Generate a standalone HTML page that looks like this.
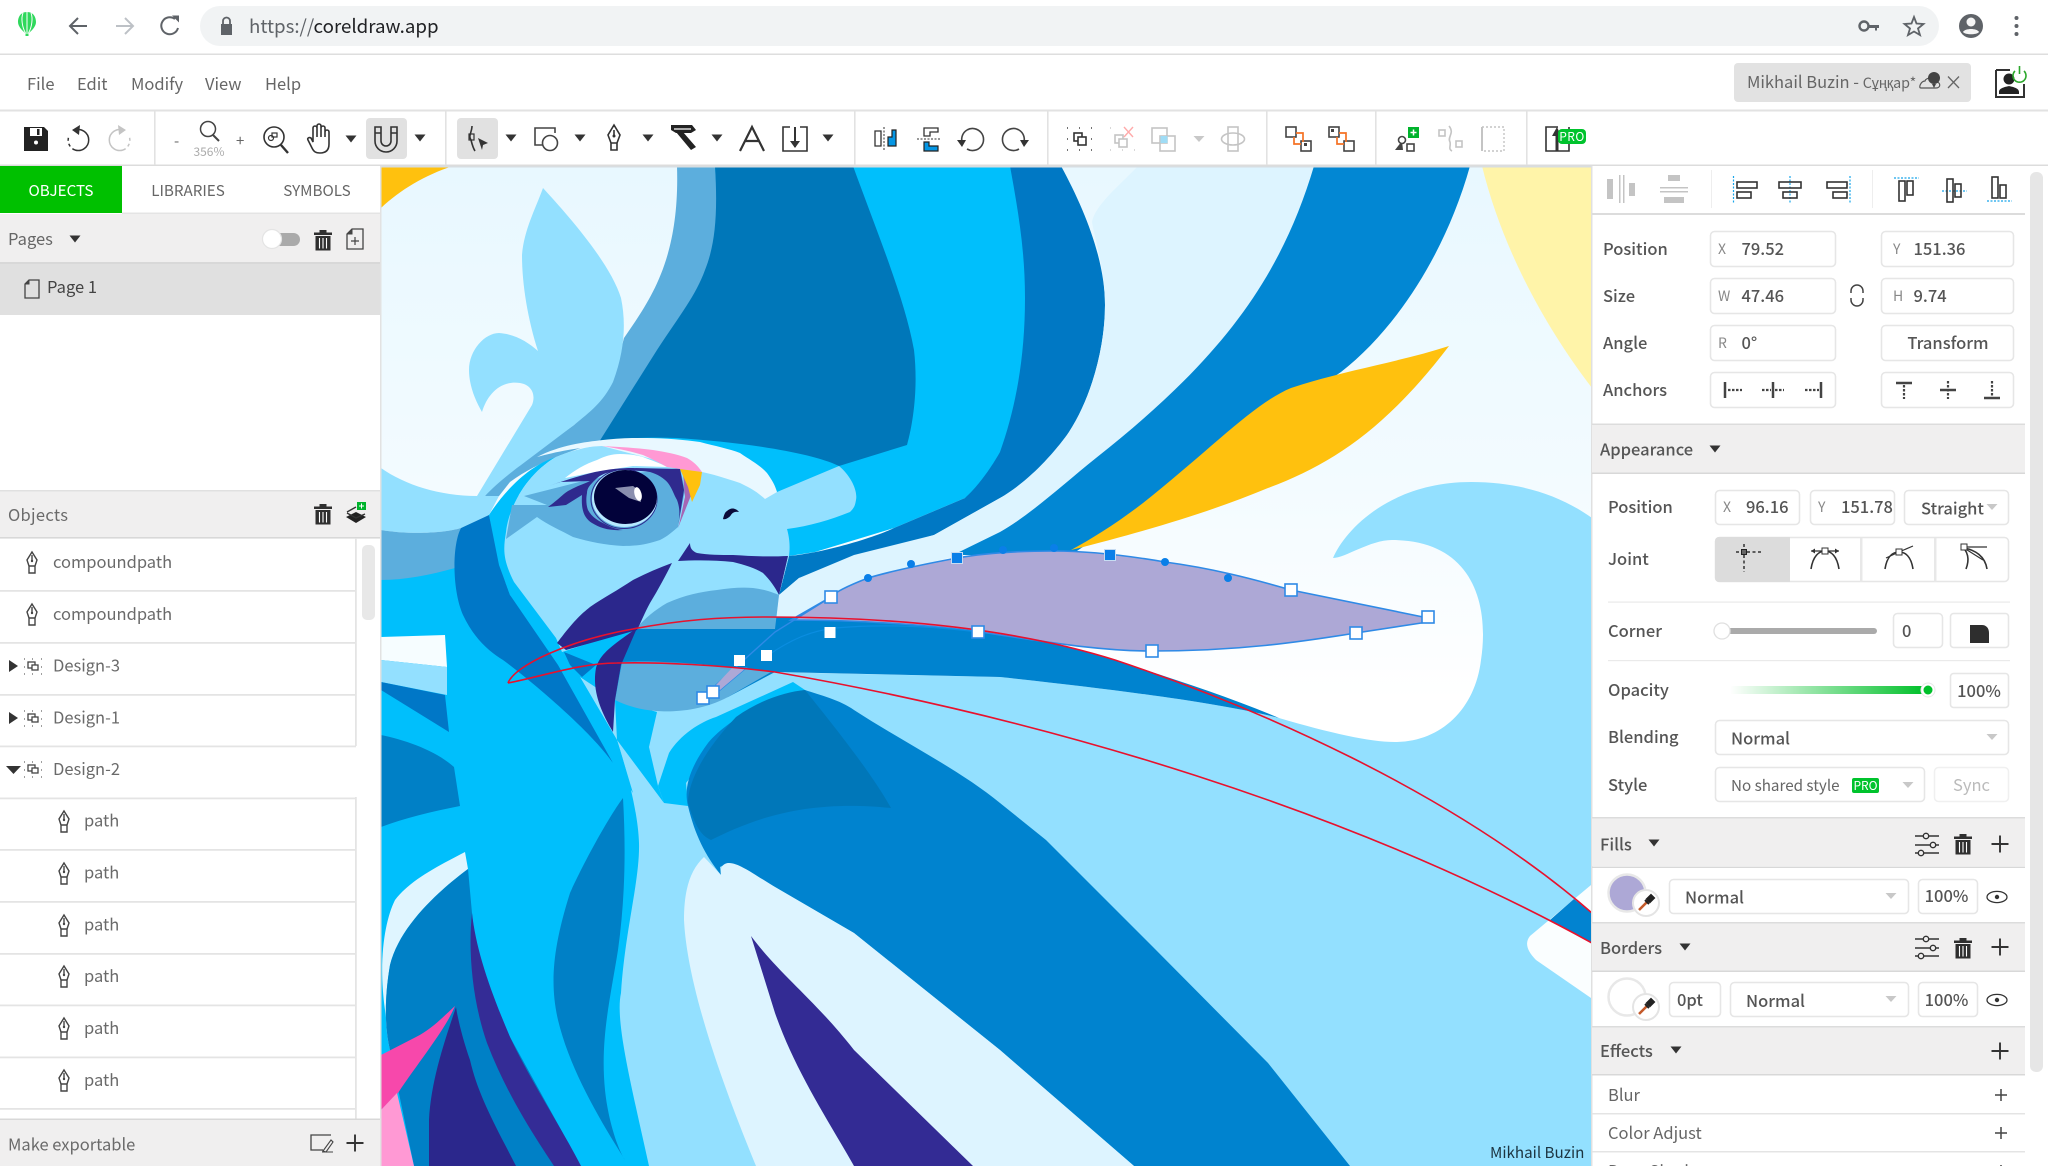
<!DOCTYPE html>
<html lang="en"><head><meta charset="utf-8"><title>CorelDRAW.app</title>
<style>
html,body{margin:0;padding:0;background:#fff;overflow:hidden}
svg{display:block}
text{font-family:"Noto Sans CJK SC","Noto Sans CJK JP","Liberation Sans",sans-serif;font-size:16.5px;fill:#555}
.l{font-weight:500;fill:#555}
.o{fill:#6a6a6a}
.m{fill:#666}
.b{fill:#fff;stroke:#e6e6e6;stroke-width:1.6}
.i{fill:none;stroke:#333;stroke-width:1.6}
.g{fill:none;stroke:#c4c4c4;stroke-width:1.6}
.sel{fill:#fff;stroke:#2f8ae6;stroke-width:1.6}
.hd{fill:#f0efef}
.ln{fill:#e2e2e2}
</style></head><body>
<svg xmlns="http://www.w3.org/2000/svg" width="2048" height="1166" viewBox="0 0 2048 1166">
<defs>
<clipPath id="cv"><rect x="381" y="166" width="1211" height="1000"/></clipPath>
<linearGradient id="bg" x1="0" y1="166" x2="0" y2="700" gradientUnits="userSpaceOnUse"><stop offset="0" stop-color="#e8f8ff"/><stop offset=".6" stop-color="#f3fbff"/><stop offset="1" stop-color="#fff"/></linearGradient>
<linearGradient id="op" x1="0" x2="1" y1="0" y2="0"><stop offset="0" stop-color="#00c02a" stop-opacity="0"/><stop offset="1" stop-color="#00c02a"/></linearGradient>
<path id="tri" d="M-5.5 -3.5H5.5L0 3.5Z" fill="#333"/>
<path id="trg" d="M-5.5 -3H5.5L0 3Z" fill="#c8c8c8"/>
<g id="trash"><path d="M-9 -7.5H9V-5H-9Z M-3.5 -7.5V-10H3.5V-7.5Z M-7.5 -4H7.5V10.5H-7.5Z" fill="#2f2f2f"/><path d="M-3.5 -2V8.5M0 -2V8.5M3.5 -2V8.5" stroke="#fff" stroke-width="1.1"/></g>
<g id="nib"><path d="M0 -11L5 -3L3 3H-3L-5 -3Z M-3 3V10H3V3 M0 -8V-2" class="i" style="stroke:#444;stroke-width:1.4"/><circle cx="0" cy="-2" r="1.2" fill="#444"/></g>
<g id="grp"><path d="M-9 -7h1M-1 -7h1M8 -7h1M-9 1h1M8 1h1M-9 8h1M-1 8h1M8 8h1" stroke="#666" stroke-width="1.3"/><rect x="-5" y="-4" width="7" height="6" class="i" style="stroke:#444;stroke-width:1.3"/><rect x="-1" y="-1" width="6" height="5" fill="#fff" style="stroke:#444;stroke-width:1.3"/></g>
<g id="plus"><path d="M-8.5 0H8.5M0 -8.5V8.5" stroke="#333" stroke-width="1.9"/></g>
<g id="sl"><path d="M-12 -8H12M-12 1H12M-12 9H12" stroke="#333" stroke-width="1.5"/><circle cx="-1" cy="-8" r="2.7" fill="#f0efef" stroke="#333" stroke-width="1.4"/><circle cx="6" cy="1" r="2.7" fill="#f0efef" stroke="#333" stroke-width="1.4"/><circle cx="-6" cy="9" r="2.7" fill="#f0efef" stroke="#333" stroke-width="1.4"/></g>
<g id="eye"><ellipse rx="10" ry="5.6" class="i" style="stroke-width:1.3"/><circle r="2.2" fill="#333"/></g>
<g id="drop"><circle r="13" fill="#fff" stroke="#e4e4e4" stroke-width="2"/><path d="M-7 7L2 -2" stroke="#c45a2a" stroke-width="2.6"/><path d="M-1 -3L3 1M1 -4L5 -8L8 -5L4 -1Z" stroke="#222" stroke-width="2" fill="#222"/></g>
<g id="hW"><rect x="-6" y="-6" width="12" height="12" class="sel"/></g>
</defs>

<!-- ARTWORK -->
<g clip-path="url(#cv)">
<rect x="381" y="166" width="1211" height="1000" fill="url(#bg)"/>
<path d="M381 166H453C425 175 400 190 381 208Z" fill="#ffc10e"/>
<path d="M1482 166H1592V388C1555 340 1505 260 1482 166Z" fill="#fff4a9"/>

<!-- cyan base -->
<path d="M599 442L715 166H1060V460L965 498L894 528L815 552L789 556L700 650L680 1166H381V580L489 515Z" fill="#00bffc"/>
<!-- mid band -->
<path d="M677 166H715C720 240 716 270 696 300C680 335 640 395 599 442C575 450 540 460 510 482L499 496H485C495 480 510 472 525 460L574 425C595 405 615 375 624 338C650 300 680 260 677 166Z" fill="#5caedd"/>
<!-- dark block -->
<path d="M715 166H853C880 240 905 300 914 350C918 385 914 420 907 445L839 466C810 452 740 442 677 438C650 437 620 438 599 442L657 350C680 315 696 295 705 270C715 245 718 215 715 166Z" fill="#0077b9"/>

<!-- crest and left light -->
<path d="M543 188C565 212 610 262 621 298C626 322 625 350 613 382C603 402 590 412 574 425L525 462C510 473 495 485 485 496H499L489 515L461 528C445 533 410 535 381 530V468C405 485 440 496 477 496L532 405C536 395 532 385 520 383C500 380 487 395 482 412C475 400 469 385 469 370C469 350 485 333 499 333C515 334 528 342 538 351C528 320 522 285 522 255C524 230 535 210 543 188Z" fill="#93e0ff"/>
<path d="M381 530C410 535 445 533 461 528L455 568C430 575 405 580 381 580Z" fill="#5caedd"/>

<!-- left column pieces -->
<path d="M381 637L445 635L447 667L381 660Z" fill="#f6fdff"/>
<path d="M381 660L447 667V695L381 682Z" fill="#93e0ff"/>
<path d="M381 682L445 695L449 732L381 690Z" fill="#0077c7"/>
<path d="M381 735C405 740 435 750 454 767L460 806C430 812 405 818 381 827Z" fill="#0080c6"/>
<path d="M465 852L468 869C440 890 400 925 390 965C384 1000 385 1030 390 1050L385 1010C378 960 385 920 395 900C410 880 440 865 465 852Z" fill="#dff5ff"/>
<path d="M468 869C440 890 400 925 390 965C384 1000 385 1030 390 1050L414 1166H581L510 1037C490 990 475 950 472 913Z" fill="#0080c6"/>
<path d="M472 913C468 950 472 1000 487 1043C505 1090 530 1130 554 1166H581C560 1125 530 1080 510 1037C490 990 476 950 472 913Z" fill="#342c96"/>
<path d="M456 1007C445 1040 431 1080 429 1120V1166H516C495 1125 478 1095 470 1060C463 1040 458 1020 456 1007Z" fill="#2b278c"/>
<path d="M455 1006C440 1020 430 1030 416 1037L381 1055V1110L398 1093C420 1060 445 1030 455 1006Z" fill="#f748ab"/>
<path d="M381 1110L397 1093L414 1166H381Z" fill="#ff99d4"/>

<!-- big light field with white blob -->
<path d="M1333 558C1345 530 1390 482 1471 482C1520 482 1560 495 1592 518V1166H649C630 1080 615 1020 621 993C625 930 640 880 639 843C638 810 625 765 617 740L580 677L615 700L769 672L1000 677C1120 690 1220 703 1279 718C1330 733 1370 742 1395 742C1440 742 1475 710 1481 660C1490 600 1470 540 1392 540C1370 540 1345 558 1333 558Z" fill="#93e0ff"/>
<path d="M1591 885L1530 936Q1522 946 1536 960L1591 998Z" fill="#fafeff"/>
<path d="M1574 899L1550 920L1592 943V913Z" fill="#0283d0"/>

<!-- dark leaf in cyan column -->
<path d="M623 798C626 850 625 900 618 950C610 1000 600 1040 605 1090C608 1120 618 1150 625 1160C600 1120 570 1070 558 1020C550 985 552 950 570 893C585 860 610 815 623 798Z" fill="#0080c6"/>

<!-- under head shapes -->
<path d="M615 700L657 712L649 747L658 786L664 803L617 740Z" fill="#00bffc"/>
<path d="M658 786L669 753C680 735 700 722 716 717L793 682L805 690L736 730L696 770L686 783L688 806L664 803Z" fill="#00bffc"/>

<!-- lower blue band -->
<path d="M805 690C820 695 840 700 854 710C900 740 960 770 1000 803L1046 840L1153 947L1268 1063L1350 1166H1134L1000 1050L854 933L775 887L728 863L720 867L721 875C705 855 695 835 688 806C684 790 688 770 708 743C725 722 770 695 805 690Z" fill="#0083cf"/>
<path d="M805 690C825 715 870 770 891 808C860 805 835 805 805 809C765 815 735 828 711 840C700 835 695 825 688 803C688 785 700 755 736 717C760 700 785 692 805 690Z" fill="#0077b9"/>
<path d="M704 857C690 870 684 890 684 920C686 960 700 1030 756 1166H1134L1000 1050L854 933L775 887C755 875 738 862 728 863C722 864 720 868 721 875Z" fill="#ddf4ff"/>
<path d="M751 936L775 1013C795 1070 825 1115 854 1166H973L854 1050C815 1000 780 975 751 936Z" fill="#332b94"/>

<!-- right bands -->
<path d="M1010 166H1061C1085 210 1105 260 1105 305C1105 350 1090 400 1069 432C1050 465 1025 485 1000 498L934 535C890 548 830 570 799 578L779 595L789 556C830 552 880 535 894 528L965 498C985 480 1000 452 1000 452C1015 410 1025 360 1025 298C1025 250 1018 210 1010 166Z" fill="#0078c4"/>
<path d="M1138 166H1314L1300 300L1096 470L1000 532L953 557L868 578L831 597L775 630L779 595L799 578L854 555L934 535L1000 498C1040 475 1069 432 1069 432C1090 400 1105 350 1105 305C1105 270 1095 240 1092 222C1095 205 1120 185 1138 166Z" fill="#ddf4ff"/>
<path d="M1314 166H1470C1445 255 1395 330 1341 372L1071 555H953L1000 532C1030 515 1060 487 1096 458C1220 360 1280 280 1314 166Z" fill="#0287d3"/>
<path d="M1449 346C1400 362 1345 370 1291 388C1255 403 1215 445 1153 495C1125 518 1095 537 1071 550C1150 530 1210 512 1268 488C1330 465 1385 430 1449 346Z" fill="#ffc10e"/>

<!-- neck -->
<path d="M489 515L461 528C452 545 452 590 463 615C475 640 490 652 503 660C530 680 590 730 613 763L570 665L510 595C500 570 495 540 489 515Z" fill="#0077c7"/>
<path d="M556 457C530 465 505 490 489 515L499 565L510 595L558 665L613 763L633 793L617 740L580 677L558 640L514 582C503 560 503 550 506 532C508 510 525 475 556 457Z" fill="#00bffc"/>

<!-- face -->
<path d="M556 457C590 442 640 440 677 442C720 447 750 465 777 492L839 466C850 475 858 490 856 500C855 505 855 507 850 512C830 520 810 526 787 529C790 540 790 548 789 556L779 595L775 630L637 628L562 652L556 638L514 582C503 560 503 550 506 532C508 510 525 475 556 457Z" fill="#93e0ff"/>
<path d="M537 457C560 445 585 442 603 440C620 438 635 438 647 438C665 438 685 440 700 442C715 446 730 449 740 453C750 460 760 465 767 473C772 480 775 485 777 492L765 499C755 490 748 487 740 483C725 478 712 474 702 472L602 446C580 447 555 452 537 457Z" fill="#e9f8ff"/>
<path d="M524 496L595 478L680 468L685 490L678 527C672 532 668 536 660 540C645 545 635 546 623 546C605 545 590 542 573 537C560 530 548 525 537 517L506 539L512 505L547 505Z" fill="#5caedd"/>
<path d="M565 478C575 470 585 464 597 460C605 456 612 454 620 454C628 454 636 455 643 457C650 460 660 463 667 467L633 466L595 472Z" fill="#fff"/>
<path d="M602 446C620 447 638 448 653 450C665 452 677 454 687 458C694 462 698 466 702 472L680 469L667 467C660 463 652 459 643 455C630 451 615 448 602 446Z" fill="#ff99d4"/>
<path d="M543 488C560 482 578 476 595 472C610 469 620 468 633 468L680 469L684 490L678 527C680 515 680 508 677 500C674 495 672 488 668 483C664 478 657 474 650 472C635 470 622 470 610 472C602 474 598 477 595 480C590 485 587 488 587 493C586 498 586 505 588 510C592 517 597 520 603 523C610 527 615 529 623 530C610 531 600 528 592 523C584 518 581 510 582 495L566 505L548 507C558 500 565 492 570 490C577 486 584 484 590 481L560 482Z" fill="#2f2a8e"/>
<path d="M682 469L688 480L692 493L678 528C681 518 683 505 685 497C684 488 684 478 682 469Z" fill="#a566b4"/>
<path d="M680 469L702 472L700 485L692 502L688 487Z" fill="#ffc10e"/>
<ellipse cx="624" cy="499" rx="33" ry="29.5" fill="#5caedd"/>
<ellipse cx="624" cy="499" rx="33" ry="29.5" fill="none" stroke="#2f2a8e" stroke-width="1"/>
<ellipse cx="624.5" cy="498.5" rx="32.5" ry="28.5" fill="#b8e9ff"/>
<ellipse cx="625.5" cy="497" rx="31.5" ry="27" fill="#02023a"/>
<path d="M615 488L633 486C637 488 640 495 641 502L629 498Z" fill="#8a8fae"/>
<ellipse cx="638" cy="494" rx="3.5" ry="7" fill="#fff" transform="rotate(-15 638 494)"/>
<path d="M723 519C724 515 725 512 727 511C730 508 735 507 739 512C735 511 732 513 731 515C729 518 725 520 723 519Z" fill="#0b0b3a"/>
<path d="M690 543L678 561C695 560 715 560 733 562C745 565 755 568 763 573C770 580 775 587 779 595L788 556C765 557 750 556 733 555C720 555 708 555 697 553C692 551 690 548 690 543Z" fill="#2b278c"/>

<!-- blue under beak -->
<path d="M633 629C680 620 720 617 767 617C900 617 1020 630 1115 660C1170 678 1230 697 1279 718C1220 703 1120 690 1000 677L775 672L728 697L657 711L615 700L622 660Z" fill="#0083cf"/>
<path d="M622 662C660 660 720 665 771 672L728 697C700 712 670 712 657 711C640 710 625 705 615 700Z" fill="#5caedd"/>
<path d="M636 629C645 618 655 610 667 603C685 595 700 592 717 590C730 588 742 587 753 588C762 589 772 592 779 595L775 629Z" fill="#5caedd"/>
<path d="M672 563C658 568 645 574 633 580C618 590 603 598 590 607C580 615 573 622 557 643L566 650L637 630C642 620 645 612 650 603C658 590 666 575 672 563Z" fill="#2b278c"/>
<path d="M637 628L621 665L615 700L613 732C600 710 592 690 596 668C600 655 608 648 637 628Z" fill="#2b278c"/>
<path d="M564 652L596 665L582 677L570 665Z" fill="#0077c7"/>

<!-- selected shape -->
<path d="M1428 618L1291 590C1250 578 1210 568 1165 562C1130 556 1090 551 1054 551C1020 551 985 553 957 558C925 564 895 570 868 578C850 585 835 592 831 597L791 620C860 620 940 625 1000 635C1060 644 1105 651 1152 651C1240 651 1300 642 1356 633L1428 622Z" fill="#ada8d6" stroke="#2f8ae6" stroke-width="1.6"/>
<path d="M831 597L775 632L716 685L720 690L746 668L732 668" fill="none" stroke="#2f8ae6" stroke-width="1.4"/>
<path d="M732 668L746 668L720 690L716 685Z" fill="#ada8d6"/>
<path d="M767 656C790 640 810 631 835 628C880 624 930 626 978 632" fill="none" stroke="#0a8de0" stroke-width="1.2"/>

<!-- red curves -->
<path d="M508 683C515 665 570 640 633 629C680 620 720 617 767 617C900 617 1020 630 1115 660C1250 705 1450 790 1592 913" fill="none" stroke="#e8112d" stroke-width="1.6"/>
<path d="M508 683C540 677 580 663 617 663C660 662 720 665 775 672C1050 720 1350 810 1592 943" fill="none" stroke="#e8112d" stroke-width="1.6"/>

<!-- handles -->
<use href="#hW" x="831" y="597"/><use href="#hW" x="1291" y="590"/><use href="#hW" x="1428" y="617"/><use href="#hW" x="1356" y="633"/><use href="#hW" x="1152" y="651"/><use href="#hW" x="978" y="632"/><use href="#hW" x="703" y="698"/><use href="#hW" x="713" y="692"/>
<rect x="824.500" y="627" width="11" height="11" fill="#fff"/><rect x="734" y="655" width="11" height="11" fill="#fff"/><rect x="761" y="650" width="11" height="11" fill="#fff"/>
<rect x="951.500" y="552.500" width="11" height="11" fill="#0a7fe8" stroke="#c6dcf2"/><rect x="1104.500" y="549.500" width="11" height="11" fill="#0a7fe8" stroke="#c6dcf2"/>
<g fill="#0a7fe8"><circle cx="868" cy="578" r="4"/><circle cx="911" cy="564" r="4"/><circle cx="1003" cy="550" r="4"/><circle cx="1054" cy="548" r="4"/><circle cx="1165" cy="562" r="4"/><circle cx="1228" cy="578" r="4"/></g>
<text x="1490" y="1158" style="fill:#1c3440;font-size:15.2px">Mikhail Buzin</text>
</g>
<rect x="381" y="166" width="1211" height="1.500" fill="#d8dde0"/>

<!-- CHROME TOP BAR -->
<rect x="0" y="53.500" width="2048" height="1.500" fill="#dedede"/>
<rect x="200" y="6" width="1739" height="40" rx="20" fill="#f1f3f4"/>
<path d="M27 12C20 12 18 18 18 22C18 27 23 31 25 33H29C31 31 36 27 36 22C36 18 34 12 27 12Z" fill="#2fd85c"/>
<path d="M27 12V33M23 13C21 18 22 27 25.500 33M31 13C33 18 32 27 28.500 33" stroke="#fff" stroke-width="1" fill="none"/><rect x="25.500" y="33.500" width="3" height="2.500" fill="#2fd85c"/>
<path d="M87 26H71M78 18L70 26L78 34" fill="none" stroke="#5f6368" stroke-width="2"/>
<path d="M116 26H132M125 18L133 26L125 34" fill="none" stroke="#bdc1c6" stroke-width="2"/>
<path d="M178 28A8.500 8.500 0 1 1 175 19" fill="none" stroke="#5f6368" stroke-width="2"/><path d="M172 15.500H179V22.500Z" fill="#5f6368"/>
<path d="M221 24H232V35H221Z" fill="#5f6368"/><path d="M223 24V21A3.500 3.500 0 0 1 230 21V24" fill="none" stroke="#5f6368" stroke-width="1.800"/>
<text x="249" y="33" style="font-size:18.700px;fill:#5f6368">https://<tspan fill="#202124">coreldraw.app</tspan></text>
<circle cx="1864" cy="26" r="4.500" fill="none" stroke="#5f6368" stroke-width="2.400"/><path d="M1868 25H1879V28H1877V30.500H1875V28H1868Z" fill="#5f6368"/>
<path d="M1914 17L1916.500 23.500L1923.500 24L1918 28.500L1920 35L1914 31.500L1908 35L1910 28.500L1904.500 24L1911.500 23.500Z" fill="none" stroke="#5f6368" stroke-width="1.800"/>
<circle cx="1971" cy="26" r="12" fill="#5f6368"/><circle cx="1971" cy="22" r="4.500" fill="#f5f5f5"/><path d="M1963 32C1965 28 1977 28 1979 32C1977 35 1965 35 1963 32Z" fill="#f5f5f5"/>
<circle cx="2016.500" cy="18" r="2" fill="#5f6368"/><circle cx="2016.500" cy="26" r="2" fill="#5f6368"/><circle cx="2016.500" cy="34" r="2" fill="#5f6368"/>

<!-- MENU -->
<g><text x="27" y="90" class="m">File</text><text x="77" y="90" class="m">Edit</text><text x="131" y="90" class="m">Modify</text><text x="205" y="90" class="m">View</text><text x="265" y="90" class="m">Help</text></g>
<rect x="1734" y="63" width="237" height="39" rx="4" fill="#e2e2e2"/>
<text x="1747" y="88" style="font-size:16.500px;fill:#666">Mikhail Buzin - <tspan style="font-size:14.300px">Сұңқар*</tspan></text>
<path d="M1921 88C1918 88 1921 81 1925 81C1926 77 1935 77 1936 82C1941 82 1941 88 1936 88Z" fill="none" stroke="#555" stroke-width="1.200"/><circle cx="1934" cy="78" r="6" fill="#444"/><path d="M1932 84H1936L1934 88Z" fill="#444"/>
<path d="M1948 76.500L1959 88M1959 76.500L1948 88" stroke="#666" stroke-width="1.300"/>
<path d="M1996 70H2010M1996 70V97H2024V84" fill="none" stroke="#333" stroke-width="2"/><circle cx="2009" cy="79" r="5.500" fill="#222"/><path d="M1999 94V92C1999 88 2005 87 2009 86C2013 87 2019 88 2019 92V94Z" fill="#222"/>
<path d="M2015 71A6.500 6.500 0 1 0 2024 71M2019.500 66V74" fill="none" stroke="#2ca82c" stroke-width="1.600"/>
<rect x="0" y="109.500" width="2048" height="2" class="ln"/>

<!-- TOOLBAR -->
<rect x="0" y="164.500" width="2048" height="1.500" style="fill:#dcdcdc"/>
<g class="ln"><rect x="154" y="111" width="1.600" height="54"/><rect x="445" y="111" width="1.600" height="54"/><rect x="854" y="111" width="1.600" height="54"/><rect x="1047" y="111" width="1.600" height="54"/><rect x="1266" y="111" width="1.600" height="54"/><rect x="1375" y="111" width="1.600" height="54"/><rect x="1526" y="111" width="1.600" height="54"/></g>
<rect x="366" y="118" width="41" height="41" rx="4" fill="#e1e1e1"/><rect x="457" y="118" width="41" height="41" rx="4" fill="#e1e1e1"/>
<g transform="translate(36 139)"><path d="M-12 -12H8L12 -8V12H-12Z" fill="#222"/><rect x="-6" y="-11" width="12" height="8" fill="#fff"/><rect x="1" y="-10" width="2.500" height="6" fill="#222"/><circle cy="3.500" r="2" fill="#fff"/></g>
<g transform="translate(78 139)"><path d="M-3 -9A10.500 10.500 0 1 1 -3 11" fill="none" stroke="#333" stroke-width="1.500"/><path d="M-3 11A10.500 10.500 0 0 1 -9 -3" fill="none" stroke="#333" stroke-width="1.500" stroke-dasharray="3 3"/><path d="M2 -14L-6 -9L1 -4Z" fill="#333"/></g>
<g transform="translate(120 139)"><path d="M3 -9A10.500 10.500 0 1 0 3 11" fill="none" stroke="#c4c4c4" stroke-width="1.500"/><path d="M3 11A10.500 10.500 0 0 0 9 -3" fill="none" stroke="#c4c4c4" stroke-width="1.500" stroke-dasharray="3 3"/><path d="M-2 -14L6 -9L-1 -4Z" fill="#c4c4c4"/></g>
<text x="174" y="146" style="font-size:15px;fill:#666">-</text><text x="236" y="146" style="font-size:15px;fill:#666">+</text>
<circle cx="208" cy="129" r="7.500" fill="none" stroke="#444" stroke-width="1.500"/><path d="M213 135L219 141" stroke="#444" stroke-width="2"/>
<text x="209" y="156" text-anchor="middle" style="font-size:12px;fill:#aaa">356%</text>
<g transform="translate(274 137)"><circle r="10" class="i"/><path d="M7 8L14 16" stroke="#333" stroke-width="2.400"/><rect x="-2" y="-4" width="5" height="4" class="i" style="stroke-width:1.200"/><circle cx="-3" cy="1" r="2.500" class="i" style="stroke-width:1.200"/></g>
<g transform="translate(318 138)"><path d="M-10 2L-6 10C-4 14 -2 15 2 15C8 15 11 12 11 6V-6A2 2 0 0 0 7 -6V-1V-10A2 2 0 0 0 3 -10V-1V-12A2 2 0 0 0 -1 -12V-1V-10A2 2 0 0 0 -5 -10V4L-7 0C-9 -1 -11 0 -10 2Z" class="i"/></g>
<use href="#tri" x="351" y="139"/><use href="#tri" x="420" y="138"/><use href="#tri" x="511" y="138"/><use href="#tri" x="580" y="138"/><use href="#tri" x="648" y="138"/><use href="#tri" x="717" y="138"/><use href="#tri" x="828" y="138"/>
<g transform="translate(386 139)"><path d="M-11 -12V2A11 11 0 0 0 11 2V-12H5V2A5 5 0 0 1 -5 2V-12ZM-11 -6H-5M5 -6H11" class="i"/></g>
<g transform="translate(477 138)"><path d="M-5 -12C-5 -6 -9 -2 -6 2C-5 6 -4 10 -2 13" class="i"/><rect x="-8" y="-4" width="5" height="6" class="i" style="stroke-width:1.200"/><path d="M1 0L11 5L6 7L5 12Z" fill="#333"/></g>
<g transform="translate(546 138)"><path d="M2 -10H-11V7H-3M2 -10H9V-5" class="i" style="stroke:#444"/><circle cx="4" cy="5" r="7.500" class="i" style="stroke:#444"/></g>
<g transform="translate(614 138)"><path d="M0 -13L6 -3L3 5H-3L-6 -3Z M-3 5V12H3V5 M0 -8V-3" class="i"/><circle cy="-2" r="1.500" fill="#333"/></g>
<g transform="translate(683 138)"><path d="M-12 -13H9L13 -8L8 -5H-7L-12 -8Z" fill="#222"/><path d="M-7 -6L8 12L13 9L0 -6Z" fill="#222"/><path d="M-9 -9H8" stroke="#fff" stroke-width="1.200"/></g>
<path d="M740 151L752 127L764 151M745 141H759" fill="none" stroke="#333" stroke-width="2.200"/>
<g transform="translate(795 139)"><path d="M-5 -12H-12V12H12V-12H5" class="i"/><path d="M0 -12V8" stroke="#333" stroke-width="2"/><path d="M-5 2H5L0 9Z" fill="#333"/></g>
<g transform="translate(885 139)"><path d="M-1 -12V12" stroke="#333" stroke-width="1" stroke-dasharray="2 1.500"/><path d="M-10 -8H-4V7H-10Z" class="i" style="stroke-width:1.300"/><path d="M3 7H11V-9H7V-2H3Z" fill="#0596e4" stroke="#222" stroke-width="1.200"/></g>
<g transform="translate(929 139)"><path d="M-12 0H12" stroke="#333" stroke-width="1" stroke-dasharray="2 1.500"/><path d="M-5 -3V-11H9V-7H1V-3Z" class="i" style="stroke-width:1.300"/><path d="M-5 3H0V7H9V12H-5Z" fill="#0596e4" stroke="#222" stroke-width="1.200"/></g>
<g transform="translate(972 139)"><path d="M-5 -9A11 11 0 1 1 -5 10" class="i" style="stroke:#444"/><path d="M-5 -9A11 11 0 0 0 -10 3" class="i" style="stroke:#444"/><path d="M-15 1H-6L-10 8Z" fill="#333"/></g>
<g transform="translate(1014 139)"><path d="M5 -9A11 11 0 1 0 5 10" class="i" style="stroke:#444"/><path d="M5 -9A11 11 0 0 1 10 3" class="i" style="stroke:#444"/><path d="M15 1H6L10 8Z" fill="#333"/></g>
<g transform="translate(1079 139)"><path d="M-12 -11h1M0 -11h1M12 -11h1M-12 0h1M12 0h1M-12 11h1M0 11h1M12 11h1" stroke="#444" stroke-width="1.600"/><rect x="-5" y="-6" width="8" height="8" class="i" style="stroke-width:1.600"/><rect x="-1" y="-2" width="8" height="8" fill="#fff" stroke="#333" stroke-width="1.600"/></g>
<g transform="translate(1122 139)"><path d="M-12 -11h1M12 11h1M0 11h1M-12 11h1" stroke="#ccc" stroke-width="1.400"/><rect x="-7" y="-4" width="8" height="8" class="g"/><rect x="-3" y="0" width="8" height="8" fill="#fff" stroke="#c4c4c4" stroke-width="1.600"/><path d="M2 -12L11 -2M11 -12L2 -2" stroke="#ffaaaa" stroke-width="1.400"/></g>
<g transform="translate(1164 139)"><rect x="-12" y="-11" width="15" height="15" class="g"/><rect x="-4" y="-3" width="15" height="15" class="g"/><rect x="-3.500" y="-3" width="7" height="7" fill="#9fdcf5"/></g>
<use href="#trg" x="1199" y="139"/>
<g transform="translate(1233 139)"><rect x="-5" y="-12" width="10" height="24" class="g"/><ellipse rx="11.500" ry="6" class="g"/></g>
<g transform="translate(1298 139)"><rect x="-12" y="-12" width="10" height="10" class="i" style="stroke:#444"/><rect x="3" y="2" width="10" height="10" class="i" style="stroke:#444"/><path d="M-2 -6H5V3M-4 -2V5H3" fill="none" stroke="#f57224" stroke-width="1.700"/><rect x="6" y="4" width="3" height="3" fill="#444"/></g>
<g transform="translate(1341 139)"><rect x="-12" y="-12" width="10" height="10" class="i" style="stroke:#444"/><rect x="3" y="2" width="10" height="10" class="i" style="stroke:#444"/><path d="M-2 -6H5V3M-4 -2V5H3" fill="none" stroke="#f57224" stroke-width="1.700"/><rect x="-10" y="-10" width="3" height="3" fill="#444"/></g>
<g transform="translate(1406 139)"><path d="M-11 11L-4 2L-3 11Z" fill="#444"/><circle cx="-4" cy="1" r="3.500" fill="#fff" stroke="#444" stroke-width="1.600"/><rect x="1" y="5" width="7" height="7" class="i" style="stroke:#444"/><rect x="2" y="-12" width="11" height="11" fill="#00b32c"/><path d="M4.500 -6.500H10.500M7.500 -9.500V-3.500" stroke="#fff" stroke-width="1.500"/></g>
<g transform="translate(1451 139)"><rect x="-12" y="-9" width="6" height="6" class="g"/><rect x="5" y="2" width="6" height="6" class="g"/><path d="M-2 -13C4 -6 -4 -2 -1 3C0 7 -3 10 1 12" class="g"/></g>
<g transform="translate(1493 139)"><path d="M-11 -12V12" stroke="#c4c4c4" stroke-width="2"/><path d="M-11 -12H11V12H-11" stroke="#c4c4c4" fill="none" stroke-width="1.400" stroke-dasharray="2 2"/></g>
<g transform="translate(1558 139)"><path d="M0 -12H-12V12H11V-12" class="i"/><path d="M-1 -6V12" stroke="#333" stroke-width="3"/><path d="M-6 -3L-1 -12L3 -3Z" fill="#333"/><rect x="0" y="-10" width="28" height="15" rx="4" fill="#00c32d"/><text x="14" y="2" text-anchor="middle" style="font-size:12px;fill:#fff;letter-spacing:.5px">PRO</text></g>

<!-- LEFT PANEL -->
<rect x="0" y="166" width="122" height="47" fill="#00c000"/>
<text x="61" y="196" text-anchor="middle" style="font-size:15.200px;fill:#fff">OBJECTS</text>
<text x="188" y="196" text-anchor="middle" style="font-size:15.200px;fill:#666">LIBRARIES</text>
<text x="317" y="196" text-anchor="middle" style="font-size:15.200px;fill:#666">SYMBOLS</text>
<rect x="122" y="212.500" width="258" height="1.500" fill="#e4e4e4"/>
<rect x="0" y="214" width="380" height="48" class="hd"/><rect x="0" y="262" width="380" height="2" fill="#d8d8d8"/>
<text x="8" y="245" class="m" style="font-size:16.500px">Pages</text><use href="#tri" x="75" y="239"/>
<rect x="268" y="233" width="32" height="13" rx="6.500" fill="#aaa"/><circle cx="272" cy="239" r="9.500" fill="#fff" stroke="#e4e4e4" stroke-width="1.200"/>
<use href="#trash" x="323" y="240"/>
<g transform="translate(355 239)"><path d="M-3 -10H8V10H-8V-5Z" class="i" style="stroke:#444;stroke-width:1.300"/><path d="M-8 -5H-3V-10" fill="#444" stroke="#444"/><path d="M-4 2H4M0 -2V6" stroke="#444" stroke-width="1.200"/></g>
<rect x="0" y="264" width="380" height="51" fill="#e0e0e0"/>
<g transform="translate(32 289)"><path d="M-3 -9H7V9H-7V-5Z" fill="none" stroke="#444" stroke-width="1.300"/><path d="M-7 -5H-3V-9" fill="#444" stroke="#444"/></g>
<text x="47" y="293" style="font-size:16.500px;fill:#444">Page 1</text>
<rect x="380" y="166" width="1.500" height="1000" fill="#e2e2e2"/>

<rect x="0" y="491" width="380" height="47" class="hd"/><rect x="0" y="490" width="380" height="1.500" fill="#e0e0e0"/><rect x="0" y="537" width="380" height="1.600" fill="#d8d8d8"/>
<text x="8" y="521" class="o" style="letter-spacing:.3px">Objects</text><use href="#trash" x="323" y="514"/>
<g transform="translate(356 514)"><path d="M-10 3L0 -2L10 3L0 9Z" fill="#222"/><path d="M-9 -2L0 -7" stroke="#333" stroke-width="1.400"/><path d="M-9 -1L0 4L9 0" fill="none" stroke="#333" stroke-width="1.400"/><rect x="1" y="-12" width="9" height="8" fill="#00b32c"/><path d="M3 -8H8M5.500 -10.500V-5.500" stroke="#fff" stroke-width="1"/></g>
<g fill="#e4e4e4"><rect y="590" width="356" height="1.800"/><rect y="642" width="356" height="1.800"/><rect y="694" width="356" height="1.800"/><rect y="745.500" width="356" height="1.800"/><rect y="797.500" width="356" height="1.800"/><rect y="849" width="356" height="1.800"/><rect y="901" width="356" height="1.800"/><rect y="953" width="356" height="1.800"/><rect y="1004.500" width="356" height="1.800"/><rect y="1056.500" width="356" height="1.800"/><rect y="1108" width="356" height="1.800"/><rect x="355" y="538" width="1.800" height="208"/><rect x="355" y="797" width="1.800" height="322"/></g>
<rect x="362" y="545" width="13" height="75" rx="5" fill="#e8e8e8"/>
<use href="#nib" x="32" y="563"/><text x="53" y="568" class="o">compoundpath</text>
<use href="#nib" x="32" y="615"/><text x="53" y="620" class="o">compoundpath</text>
<path d="M9 660V672L18 666Z" fill="#333"/><use href="#grp" x="33" y="666"/><text x="53" y="671.500" class="o">Design-3</text>
<path d="M9 712V724L18 718Z" fill="#333"/><use href="#grp" x="33" y="718"/><text x="53" y="723.500" class="o">Design-1</text>
<path d="M6 766H21L13.500 774Z" fill="#333"/><use href="#grp" x="33" y="769"/><text x="53" y="775" class="o">Design-2</text>
<use href="#nib" x="64" y="822"/><text x="84" y="826.500" class="o">path</text>
<use href="#nib" x="64" y="874"/><text x="84" y="878.500" class="o">path</text>
<use href="#nib" x="64" y="926"/><text x="84" y="930.500" class="o">path</text>
<use href="#nib" x="64" y="977"/><text x="84" y="982" class="o">path</text>
<use href="#nib" x="64" y="1029"/><text x="84" y="1034" class="o">path</text>
<use href="#nib" x="64" y="1081"/><text x="84" y="1086" class="o">path</text>
<rect x="0" y="1119.500" width="380" height="46.500" class="hd"/><rect x="0" y="1118.500" width="380" height="1.500" fill="#d8d8d8"/>
<text x="8" y="1150.500" class="o">Make exportable</text>
<g transform="translate(321 1143)"><path d="M10 -8H-10V7H2" class="i" style="stroke:#444;stroke-width:1.300"/><path d="M2 8L10 -3L12 -1L5 9Z M1 9H12" class="i" style="stroke:#444;stroke-width:1.100"/></g>
<use href="#plus" x="355" y="1143"/>

<!-- RIGHT PANEL -->
<rect x="1592" y="166" width="456" height="1000" fill="#fff"/><rect x="1591" y="166" width="1.500" height="1000" fill="#e0e0e0"/>
<rect x="2030" y="172" width="13" height="900" rx="6" fill="#e6e6e6"/>
<rect x="1592" y="213" width="433" height="2" fill="#dcdcdc"/>
<rect x="1711" y="170" width="1" height="38" fill="#eee"/><rect x="1872" y="170" width="1" height="38" fill="#eee"/>
<g transform="translate(1621 189)" fill="#c4c4c4"><rect x="-14" y="-10" width="6" height="20"/><rect x="8" y="-6" width="6" height="13"/><rect x="-2" y="-14" width="1.500" height="28"/><rect x="2" y="-14" width="1.500" height="28"/></g>
<g transform="translate(1674 189)" fill="#c4c4c4"><rect x="-6" y="-14" width="12" height="6"/><rect x="-10" y="8" width="20" height="6"/><rect x="-14" y="-2" width="28" height="1.500"/><rect x="-14" y="2" width="28" height="1.500"/></g>
<g transform="translate(1745 189)"><path d="M-11.500 -13V14" stroke="#17a5ea" stroke-width="1.200" stroke-dasharray="2 1.500"/><rect x="-8" y="-7" width="20" height="6" class="i"/><rect x="-8" y="3" width="14" height="6" class="i"/></g>
<g transform="translate(1790 189)"><path d="M0 -13V14" stroke="#17a5ea" stroke-width="1.200" stroke-dasharray="2 1.500"/><rect x="-11" y="-7" width="22" height="6" class="i"/><rect x="-7" y="3" width="14" height="6" class="i"/></g>
<g transform="translate(1838 189)"><path d="M12 -13V14" stroke="#17a5ea" stroke-width="1.200" stroke-dasharray="2 1.500"/><rect x="-11" y="-7" width="20" height="6" class="i"/><rect x="-5" y="3" width="14" height="6" class="i"/></g>
<g transform="translate(1906 189)"><path d="M-12 -11H13" stroke="#17a5ea" stroke-width="1.200" stroke-dasharray="2 1.500"/><rect x="-7" y="-8" width="6" height="20" class="i"/><rect x="1" y="-8" width="6" height="14" class="i"/></g>
<g transform="translate(1954 190)"><path d="M-12 1H13" stroke="#17a5ea" stroke-width="1.200" stroke-dasharray="2 1.500"/><rect x="-7" y="-11" width="6" height="23" class="i"/><rect x="1" y="-6" width="6" height="13" class="i"/></g>
<g transform="translate(1999 189)"><path d="M-12 12H13" stroke="#17a5ea" stroke-width="1.200" stroke-dasharray="2 1.500"/><rect x="-7" y="-12" width="6" height="21" class="i"/><rect x="1" y="-4" width="6" height="13" class="i"/></g>

<text x="1603" y="255" class="l">Position</text><text x="1603" y="302" class="l">Size</text><text x="1603" y="349" class="l">Angle</text><text x="1603" y="396" class="l">Anchors</text>
<rect x="1710.500" y="231.500" width="125" height="35" rx="4" class="b"/><rect x="1881.500" y="231.500" width="132" height="35" rx="4" class="b"/>
<rect x="1710.500" y="278.500" width="125" height="35" rx="4" class="b"/><rect x="1881.500" y="278.500" width="132" height="35" rx="4" class="b"/>
<rect x="1710.500" y="325.500" width="125" height="35" rx="4" class="b"/><rect x="1881.500" y="325.500" width="132" height="35" rx="4" class="b"/>
<rect x="1710.500" y="372.500" width="125" height="35" rx="4" class="b"/><rect x="1881.500" y="372.500" width="132" height="35" rx="4" class="b"/>
<g><text x="1718" y="254" style="font-size:14px;fill:#888">X</text><text x="1893" y="254" style="font-size:14px;fill:#888">Y</text><text x="1718" y="301" style="font-size:14px;fill:#888">W</text><text x="1893" y="301" style="font-size:14px;fill:#888">H</text><text x="1718" y="348" style="font-size:14px;fill:#888">R</text></g>
<text x="1741.500" y="255" class="l">79.52</text><text x="1913.500" y="255" class="l">151.36</text><text x="1741.500" y="302" class="l">47.46</text><text x="1913.500" y="302" class="l">9.74</text><text x="1741.500" y="349" class="l">0°</text>
<text x="1948" y="349" text-anchor="middle" class="l">Transform</text>
<path d="M1851 293V291A6 6 0 0 1 1863 291V293M1851 298V300A6 6 0 0 0 1863 300V298" fill="none" stroke="#444" stroke-width="1.500"/>
<g stroke="#444" stroke-width="2.500"><path d="M1725 382V398M1773 382V398M1821 382V398"/></g>
<g stroke="#444" stroke-width="2.200" stroke-dasharray="2.500 1.500"><path d="M1728 390H1742M1762 390H1771M1775 390H1784M1805 390H1819"/></g>
<g stroke="#444" stroke-width="2.500"><path d="M1896 383H1912M1940 390H1956M1984 398H2000"/></g>
<g stroke="#444" stroke-width="2.200" stroke-dasharray="2.500 1.500"><path d="M1904 385V399M1948 381V399M1992 381V397"/></g>

<rect x="1592" y="424" width="433" height="49" class="hd"/><rect x="1592" y="423.500" width="433" height="1.500" fill="#dcdcdc"/><rect x="1592" y="472.500" width="433" height="1.500" fill="#d8d8d8"/>
<text x="1600" y="455.500" class="l">Appearance</text><use href="#tri" x="1715" y="449"/>
<text x="1608" y="513" class="l">Position</text>
<rect x="1715.500" y="490.500" width="84" height="34" rx="4" class="b"/><rect x="1810.500" y="490.500" width="84" height="34" rx="4" class="b"/><rect x="1904.500" y="490.500" width="104" height="34" rx="4" class="b"/>
<text x="1723" y="512" style="font-size:14px;fill:#888">X</text><text x="1818" y="512" style="font-size:14px;fill:#888">Y</text>
<text x="1746" y="513" class="l">96.16</text><text x="1841" y="513" class="l">151.78</text><text x="1921" y="514.500" class="l">Straight</text><use href="#trg" x="1992" y="507"/>
<text x="1608" y="565" class="l">Joint</text>
<rect x="1715.500" y="537.500" width="293" height="44" rx="4" class="b"/>
<path d="M1715 541a4 4 0 0 1 4 -4H1790V582H1719a4 4 0 0 1 -4 -4Z" fill="#dcdcdc"/>
<rect x="1860" y="538" width="2.500" height="44" fill="#e8e8e8"/><rect x="1934" y="538" width="2.500" height="44" fill="#e8e8e8"/>
<g transform="translate(1744 552)"><path d="M-8 0H18" stroke="#333" stroke-width="1.500" stroke-dasharray="3 2.500"/><path d="M0 -8V20" stroke="#333" stroke-width="1.500" stroke-dasharray="3 2.500"/><rect x="-2.500" y="-2.500" width="5" height="5" fill="#666" stroke="#222"/></g>
<g transform="translate(1825 558)"><path d="M-14 11C-12 -2 -6 -7 0 -7C6 -7 12 -2 14 11" class="i"/><path d="M-14 -7H14" stroke="#333" stroke-width="1.200"/><rect x="-3" y="-10" width="6" height="6" fill="#fff" stroke="#333"/><path d="M-14 -7L-10 -9.500V-4.500ZM14 -7L10 -9.500V-4.500Z" fill="#333"/></g>
<g transform="translate(1899 558)"><path d="M-14 11C-12 -2 -6 -6 0 -6C6 -6 12 -2 14 11" class="i"/><path d="M-13 0L0 -6L14 -12" stroke="#333" stroke-width="1.200"/><rect x="-3" y="-9" width="6" height="6" fill="#fff" stroke="#333"/></g>
<g transform="translate(1973 558)"><path d="M-7 11C-2 -2 -8 -8 -9 -10C2 -8 12 -2 14 11" class="i"/><path d="M-9 -11H14M-9 -10L10 2" stroke="#333" stroke-width="1.200"/><rect x="-12" y="-14" width="6" height="6" fill="#fff" stroke="#333"/></g>
<rect x="1608" y="601.500" width="402" height="1.200" fill="#eaeaea"/>
<text x="1608" y="637" class="l">Corner</text>
<rect x="1728" y="628" width="149" height="6" rx="3" fill="#aaa"/><circle cx="1722" cy="631" r="8" fill="#fff" stroke="#e0e0e0" stroke-width="1.300"/>
<rect x="1893.500" y="613.500" width="49" height="34" rx="4" class="b"/><text x="1902" y="637" class="l">0</text>
<rect x="1950.500" y="613.500" width="58" height="34" rx="3" class="b"/><path d="M1970 625H1982C1986 625 1989 628 1989 633V643H1970Z" fill="#2e2e2e"/>
<rect x="1608" y="660" width="402" height="1.200" fill="#eaeaea"/>
<text x="1608" y="696" class="l">Opacity</text>
<rect x="1730" y="686" width="195" height="8" rx="2" fill="url(#op)"/><circle cx="1928" cy="690" r="7" fill="#fff" stroke="#e8e8e8"/><circle cx="1928" cy="690" r="4.500" fill="#00c02a"/>
<rect x="1950.500" y="673.500" width="58" height="34" rx="3" class="b"/><text x="1979" y="697" text-anchor="middle" class="l">100%</text>
<text x="1608" y="743" class="l">Blending</text>
<rect x="1715.500" y="720.500" width="293" height="34" rx="4" class="b"/><text x="1731" y="744.500" class="l">Normal</text><use href="#trg" x="1992" y="737"/>
<text x="1608" y="791" class="l">Style</text>
<rect x="1715.500" y="767.500" width="209" height="34" rx="4" class="b"/><text x="1731" y="791" style="fill:#666;font-size:15.200px">No shared style</text>
<rect x="1852" y="778" width="27" height="15" rx="2" fill="#00c32d"/><text x="1865.500" y="790" text-anchor="middle" style="font-size:12px;fill:#fff">PRO</text><use href="#trg" x="1908" y="785"/>
<rect x="1934.500" y="767.500" width="74" height="34" rx="4" fill="#fff" stroke="#f0f0f0" stroke-width="1.500"/><text x="1971.500" y="791" text-anchor="middle" style="fill:#bbb">Sync</text>

<rect x="1592" y="818" width="433" height="48" class="hd"/><rect x="1592" y="817" width="433" height="1.500" fill="#dcdcdc"/><rect x="1592" y="866.500" width="433" height="1.500" fill="#d8d8d8"/>
<text x="1600" y="850.500" class="l">Fills</text><use href="#tri" x="1654" y="843"/>
<use href="#sl" x="1927" y="844"/><use href="#trash" x="1963" y="844"/><use href="#plus" x="2000" y="844"/>
<circle cx="1627" cy="893" r="18.500" fill="#ada8d6" stroke="#e8e8e8" stroke-width="2.500"/><use href="#drop" x="1646" y="903"/>
<rect x="1669.500" y="879.500" width="239" height="34" rx="4" class="b"/><text x="1685" y="903.500" class="l">Normal</text><use href="#trg" x="1891" y="896"/>
<rect x="1918.500" y="879.500" width="59" height="34" rx="4" class="b"/><text x="1946.500" y="902" text-anchor="middle" class="l">100%</text><use href="#eye" x="1997" y="897"/>
<rect x="1592" y="923" width="433" height="48" class="hd"/><rect x="1592" y="922" width="433" height="1.500" fill="#dcdcdc"/><rect x="1592" y="970.500" width="433" height="1.500" fill="#d8d8d8"/>
<text x="1600" y="954" class="l">Borders</text><use href="#tri" x="1685" y="947"/>
<use href="#sl" x="1927" y="947"/><use href="#trash" x="1963" y="948"/><use href="#plus" x="2000" y="947"/>
<circle cx="1627" cy="997" r="18.500" fill="#fff" stroke="#e8e8e8" stroke-width="2.500"/><use href="#drop" x="1646" y="1007"/>
<rect x="1669.500" y="982.500" width="51" height="34" rx="4" class="b"/><text x="1677" y="1006" class="l">0pt</text>
<rect x="1730.500" y="982.500" width="178" height="34" rx="4" class="b"/><text x="1746" y="1007" class="l">Normal</text><use href="#trg" x="1891" y="999"/>
<rect x="1918.500" y="982.500" width="59" height="34" rx="4" class="b"/><text x="1946.500" y="1006" text-anchor="middle" class="l">100%</text><use href="#eye" x="1997" y="1000"/>
<rect x="1592" y="1027" width="433" height="47" class="hd"/><rect x="1592" y="1026" width="433" height="1.500" fill="#dcdcdc"/><rect x="1592" y="1074" width="433" height="1.500" fill="#d8d8d8"/>
<text x="1600" y="1057" class="l">Effects</text><use href="#tri" x="1676" y="1050"/><use href="#plus" x="2000" y="1051"/>
<text x="1608" y="1101" style="fill:#666">Blur</text><path d="M1995 1095H2007M2001 1089V1101" stroke="#444" stroke-width="1.500"/><rect x="1592" y="1113" width="433" height="1.500" fill="#e4e4e4"/>
<text x="1608" y="1139" style="fill:#666">Color Adjust</text><path d="M1995 1133H2007M2001 1127V1139" stroke="#444" stroke-width="1.500"/><rect x="1592" y="1151" width="433" height="1.500" fill="#e4e4e4"/>
<text x="1608" y="1177" style="fill:#666">Drop Shadow</text><path d="M2001 1165V1177" stroke="#444" stroke-width="1.500"/>
</svg>
</body></html>
